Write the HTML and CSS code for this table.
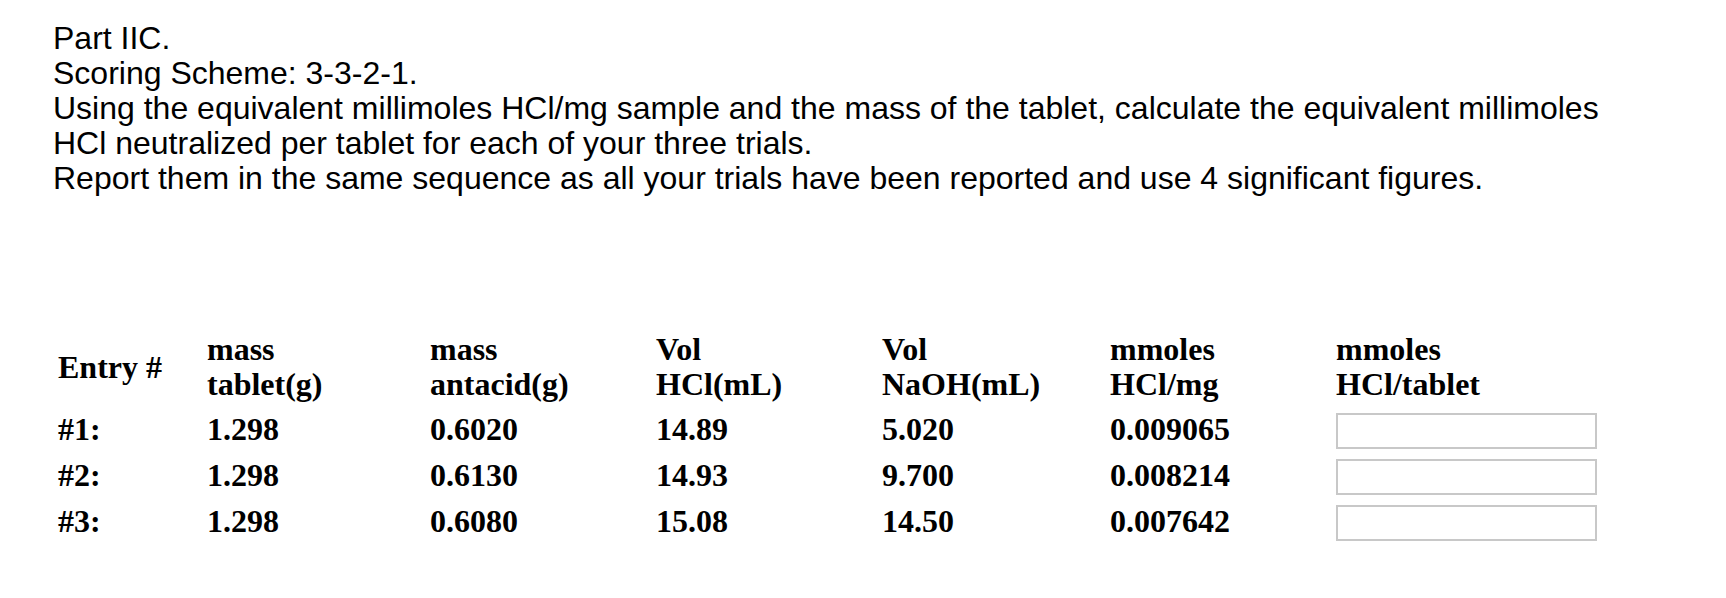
FILE: index.html
```html
<!DOCTYPE html>
<html>
<head>
<meta charset="utf-8">
<link rel="stylesheet" href="styles.css">
</head>
<body>
<div class="page">
  <div class="intro">
    Part IIC.<br>
    Scoring Scheme: 3-3-2-1.<br>
    Using the equivalent millimoles HCl/mg sample and the mass of the tablet, calculate the equivalent millimoles HCl neutralized per tablet for each of your three trials.<br>
    Report them in the same sequence as all your trials have been reported and use 4 significant figures.
  </div>
  <table class="data">
    <colgroup>
      <col class="c-entry"><col class="c1"><col class="c2"><col class="c3"><col class="c4"><col class="c5"><col class="c6">
    </colgroup>
    <thead>
      <tr>
        <th>Entry #</th>
        <th>mass<br>tablet(g)</th>
        <th>mass<br>antacid(g)</th>
        <th>Vol<br>HCl(mL)</th>
        <th>Vol<br>NaOH(mL)</th>
        <th>mmoles<br>HCl/mg</th>
        <th>mmoles<br>HCl/tablet</th>
      </tr>
    </thead>
    <tbody>
      <tr>
        <td>#1:</td><td>1.298</td><td>0.6020</td><td>14.89</td><td>5.020</td><td>0.009065</td>
        <td><input class="answer" type="text"></td>
      </tr>
      <tr>
        <td>#2:</td><td>1.298</td><td>0.6130</td><td>14.93</td><td>9.700</td><td>0.008214</td>
        <td><input class="answer" type="text"></td>
      </tr>
      <tr>
        <td>#3:</td><td>1.298</td><td>0.6080</td><td>15.08</td><td>14.50</td><td>0.007642</td>
        <td><input class="answer" type="text"></td>
      </tr>
    </tbody>
  </table>
</div>
</body>
</html>
```

FILE: styles.css
```css
html, body {
  margin: 0;
  padding: 0;
  background: #ffffff;
}

.page {
  padding: 21px 0 0 53px;
  width: 1600px;
}

.intro {
  font-family: "Liberation Sans", Arial, sans-serif;
  font-size: 32px;
  line-height: 35px;
  color: #000;
}

.data {
  margin-top: 136px;
  margin-left: 5px;
  border-collapse: collapse;
  table-layout: fixed;
  font-family: "Liberation Serif", "Times New Roman", serif;
  font-weight: bold;
  font-size: 32px;
  color: #000;
}

.c-entry { width: 149px; }
.c1 { width: 223px; }
.c2 { width: 226px; }
.c3 { width: 226px; }
.c4 { width: 228px; }
.c5 { width: 226px; }
.c6 { width: 270px; }

.data th {
  text-align: left;
  font-weight: bold;
  line-height: 35px;
  padding: 0;
  vertical-align: middle;
}

.data td {
  padding: 0;
  height: 46px;
  line-height: 36px;
  vertical-align: middle;
}

.data tbody tr:first-child td {
  padding-top: 4px;
}

.answer {
  box-sizing: border-box;
  width: 261px;
  height: 36px;
  border: 2px solid #c8c8c8;
  border-radius: 0;
  background: #fff;
  margin: 4px 0 0 0;
  padding: 0;
  display: block;
}
```
